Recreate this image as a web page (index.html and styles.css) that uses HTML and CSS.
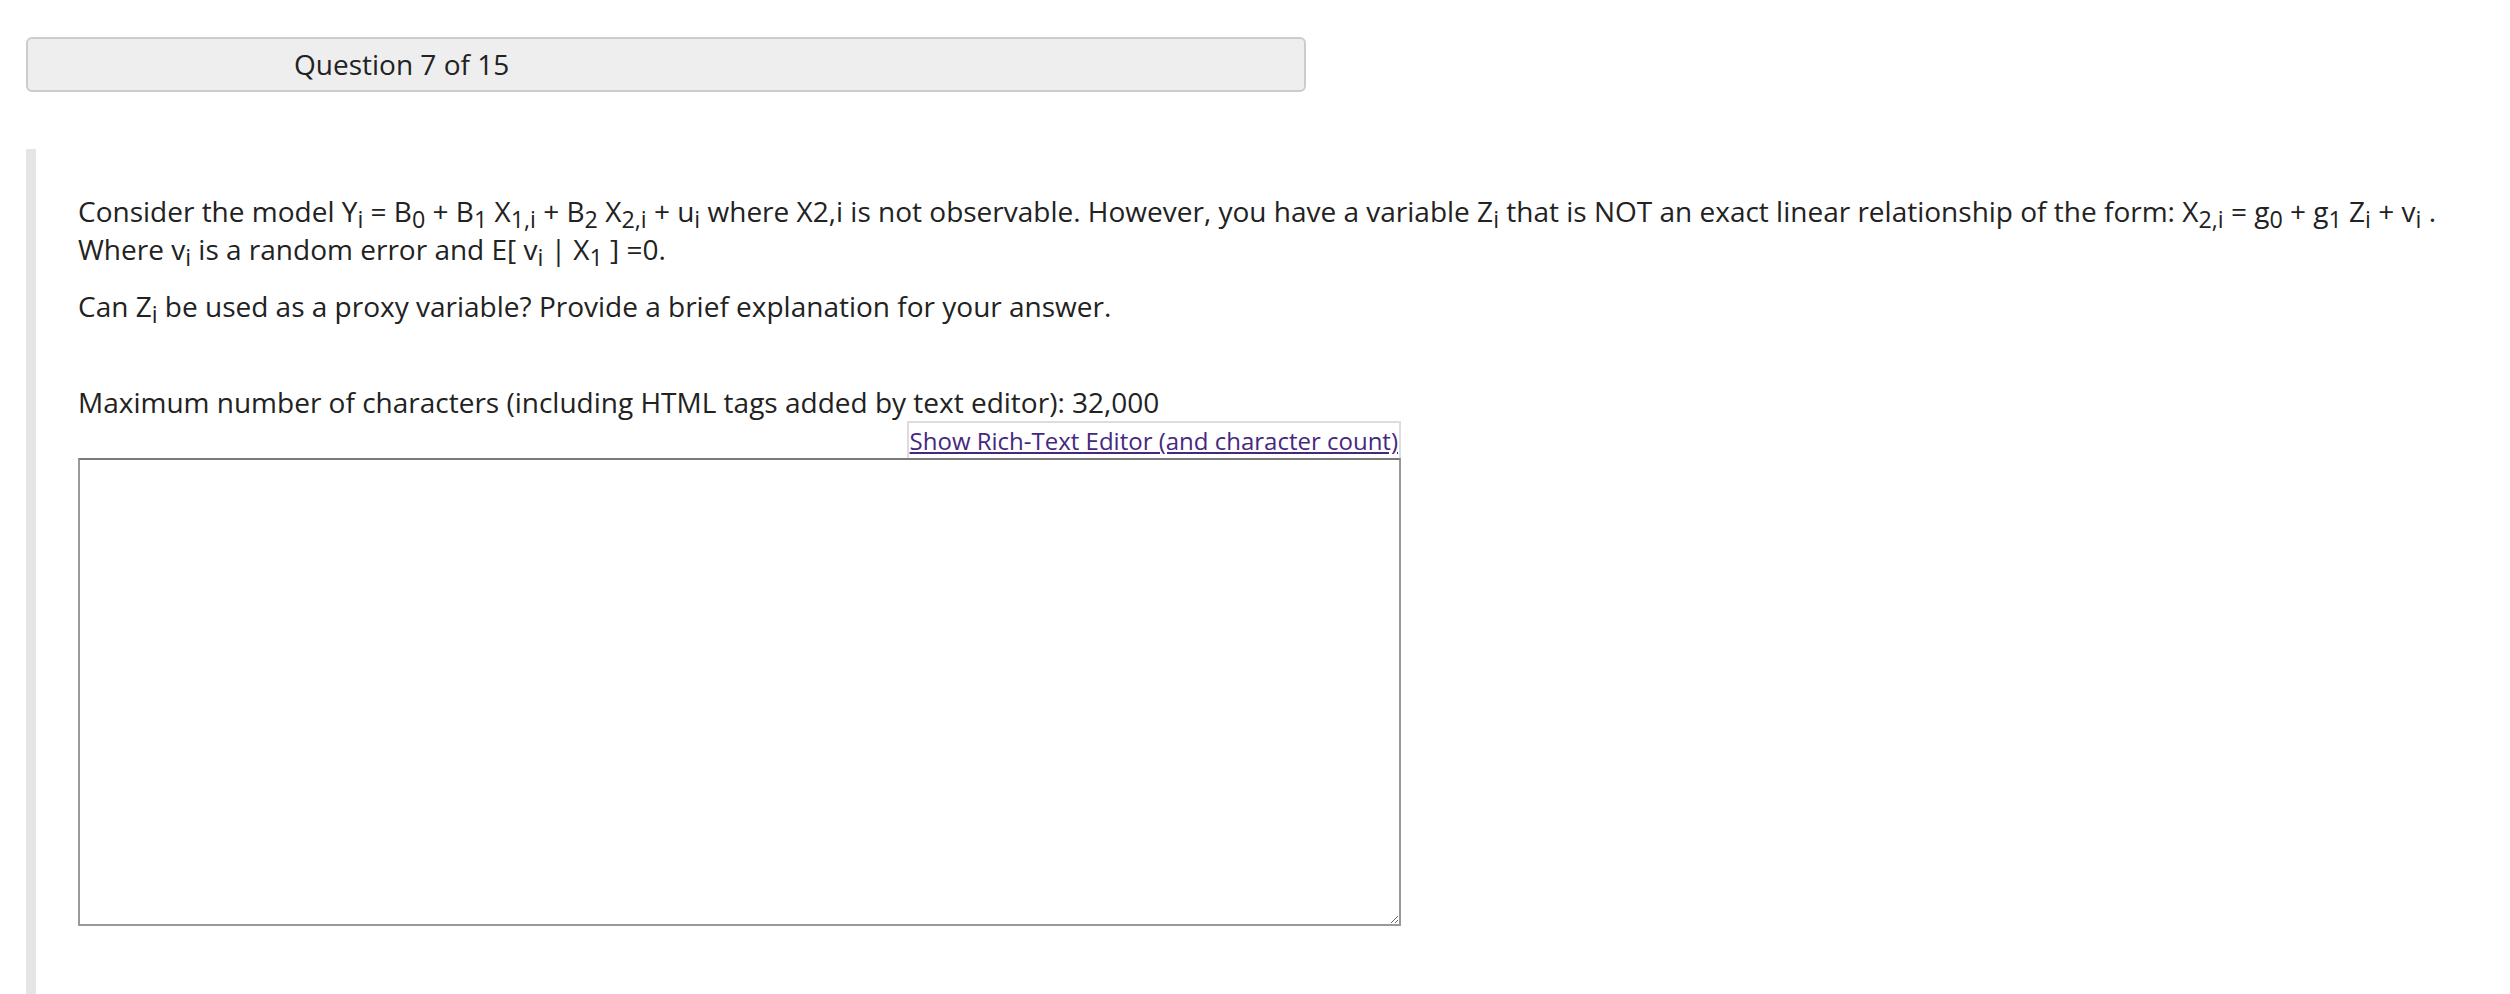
FILE: index.html
```html
<!DOCTYPE html>
<html>
<head>
<meta charset="utf-8">
<link rel="stylesheet" href="styles.css">
</head>
<body>
<div class="qheader"><span class="qtitle">Question 7 of 15</span></div>
<div class="question">
  <div class="qbody">
    <p class="para p1">Consider the model Y<sub>i</sub> = B<sub>0</sub> + B<sub>1</sub> X<sub>1,i</sub> + B<sub>2</sub> X<sub>2,i</sub> + u<sub>i</sub> where X2,i is not observable. However, you have a variable Z<sub>i</sub> that is NOT an exact linear relationship of the form: X<sub>2,i</sub> = g<sub>0</sub> + g<sub>1</sub> Z<sub>i</sub> + v<sub>i</sub> .<br>Where v<sub>i</sub> is a random error and E[ v<sub>i</sub> | X<sub>1</sub> ] =0.</p>
    <p class="para p2">Can Z<sub>i</sub> be used as a proxy variable? Provide a brief explanation for your answer.</p>
    <div class="answer">
      <p class="para maxchars">Maximum number of characters (including HTML tags added by text editor): 32,000</p>
      <div class="editor">
        <div class="linkrow"><a class="richlink" href="#">Show Rich-Text Editor (and character count)</a></div>
        <textarea class="answerbox"></textarea>
      </div>
    </div>
  </div>
</div>
</body>
</html>
```
FILE: styles.css
```css
html, body {
  margin: 0;
  padding: 0;
  background: #fff;
}
body {
  font-family: "Open Sans", "Liberation Sans", sans-serif;
  color: #222;
}
.qheader {
  margin: 37px 0 0 26px;
  width: 1280px;
  height: 55px;
  box-sizing: border-box;
  background: #eeeeee;
  border: 2px solid #cccccc;
  border-radius: 6px;
  padding: 0 0 2px 266px;
  display: flex;
  align-items: center;
}
.qtitle {
  font-size: 28px;
  color: #222;
}
.question {
  margin: 57px 0 0 26px;
  border-left: 10px solid #e5e5e5;
  min-height: 845px;
}
.qbody {
  padding: 43px 0 0 42px;
}
.para {
  margin: 0;
  font-size: 28px;
  line-height: 38px;
}
sub {
  font-size: 23.3px;
  line-height: 0;
  vertical-align: -6px;
}
.p2 {
  margin-top: 19px;
}
.answer {
  margin-top: 58px;
}
.editor {
  width: 1323px;
}
.linkrow {
  display: flex;
  justify-content: flex-end;
}
.richlink {
  font-size: 24px;
  line-height: 35px;
  color: #46287f;
  text-decoration: underline;
  border: 2px solid #dddddd;
  border-bottom: none;
  padding: 0 1px;
  display: block;
}
.answerbox {
  display: block;
  width: 1323px;
  height: 468px;
  box-sizing: border-box;
  border: 2px solid #999999;
  border-top-color: #7a7a7a;
  margin: 0;
  padding: 4px;
  resize: both;
  background: #fff;
}
```
